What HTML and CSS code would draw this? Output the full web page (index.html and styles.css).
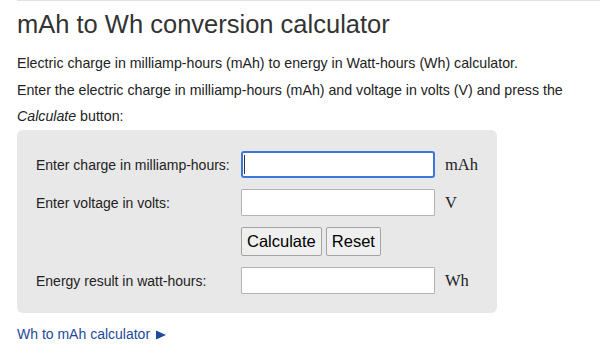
FILE: index.html
```html
<!DOCTYPE html>
<html lang="en">
<head>
<meta charset="utf-8">
<title>mAh to Wh conversion calculator</title>
<link rel="stylesheet" href="styles.css">
</head>
<body>
<div class="page">
  <h1 class="title">mAh to Wh conversion calculator</h1>
  <p class="text">Electric charge in milliamp-hours (mAh) to energy in Watt-hours (Wh) calculator.</p>
  <p class="text">Enter the electric charge in milliamp-hours (mAh) and voltage in volts (V) and press the <i>Calculate</i> button:</p>
  <form class="calc">
    <label class="lbl" for="q">Enter charge in milliamp-hours:</label>
    <span class="field focused"><input class="inp" id="q" type="text"></span>
    <span class="unit">mAh</span>

    <label class="lbl" for="v">Enter voltage in volts:</label>
    <span class="field"><input class="inp" id="v" type="text"></span>
    <span class="unit">V</span>

    <span class="lbl"></span>
    <span class="btns"><button class="btn" type="button">Calculate</button><button class="btn" type="reset">Reset</button></span>
    <span class="unit"></span>

    <label class="lbl" for="e">Energy result in watt-hours:</label>
    <span class="field"><input class="inp" id="e" type="text"></span>
    <span class="unit">Wh</span>
  </form>
  <a class="link" href="#">Wh to mAh calculator <svg class="tri" width="10" height="10" viewBox="0 0 10 10" aria-hidden="true"><polygon points="0,0.5 10,5 0,9.5" fill="currentColor"/></svg></a>
</div>
</body>
</html>
```
FILE: styles.css
```css
html, body {
  margin: 0;
  padding: 0;
  background: #fff;
}
body {
  font-family: "Liberation Sans", Arial, sans-serif;
  color: #222;
}
.page {
  margin: 0 0 0 17px;
  border-top: 1px solid #e2e2e2;
}
.title {
  font-size: 25.5px;
  font-weight: normal;
  line-height: 30px;
  color: #333;
  margin: 8px 0 11px;
}
.text {
  font-size: 14.2px;
  line-height: 26px;
  margin: 0 0 1px;
  color: #222;
}
.calc {
  width: 442px;
  margin-top: 1px;
  padding: 21px 19px 19px 19px;
  background: #e8e8e8;
  border-radius: 6px;
  display: grid;
  grid-template-columns: 205px 194px auto;
  row-gap: 11px;
  align-items: center;
}
.lbl {
  font-size: 14px;
  color: #222;
}
.field {
  position: relative;
  display: block;
  height: 27px;
}
.inp {
  box-sizing: border-box;
  width: 194px;
  height: 27px;
  margin: 0;
  border: 1px solid #b3b3b3;
  border-radius: 1px;
  background: #fff;
  padding: 0 4px;
  font-size: 14px;
  outline: none;
}
.focused .inp {
  border: 2px solid #3b77db;
  border-radius: 3px;
}
.focused::after {
  content: "";
  position: absolute;
  left: 3px;
  top: 4px;
  width: 1px;
  height: 19px;
  background: #333;
}
.unit {
  font-family: "Liberation Serif", "Times New Roman", serif;
  font-size: 16.5px;
  color: #222;
  padding-left: 10px;
}
.btns {
  display: flex;
  gap: 4px;
}
.btn {
  height: 29px;
  margin: 0;
  padding: 0 5px;
  font-family: "Liberation Sans", Arial, sans-serif;
  font-size: 16.5px;
  color: #000;
  background: #efefef;
  border: 1px solid #a3a3a3;
  border-radius: 2px;
}
.link {
  display: inline-block;
  margin-top: 12px;
  font-size: 14px;
  line-height: 18px;
  color: #1d4a9c;
  text-decoration: none;
}
.tri {
  vertical-align: -1px;
  margin-left: 2px;
}
```
